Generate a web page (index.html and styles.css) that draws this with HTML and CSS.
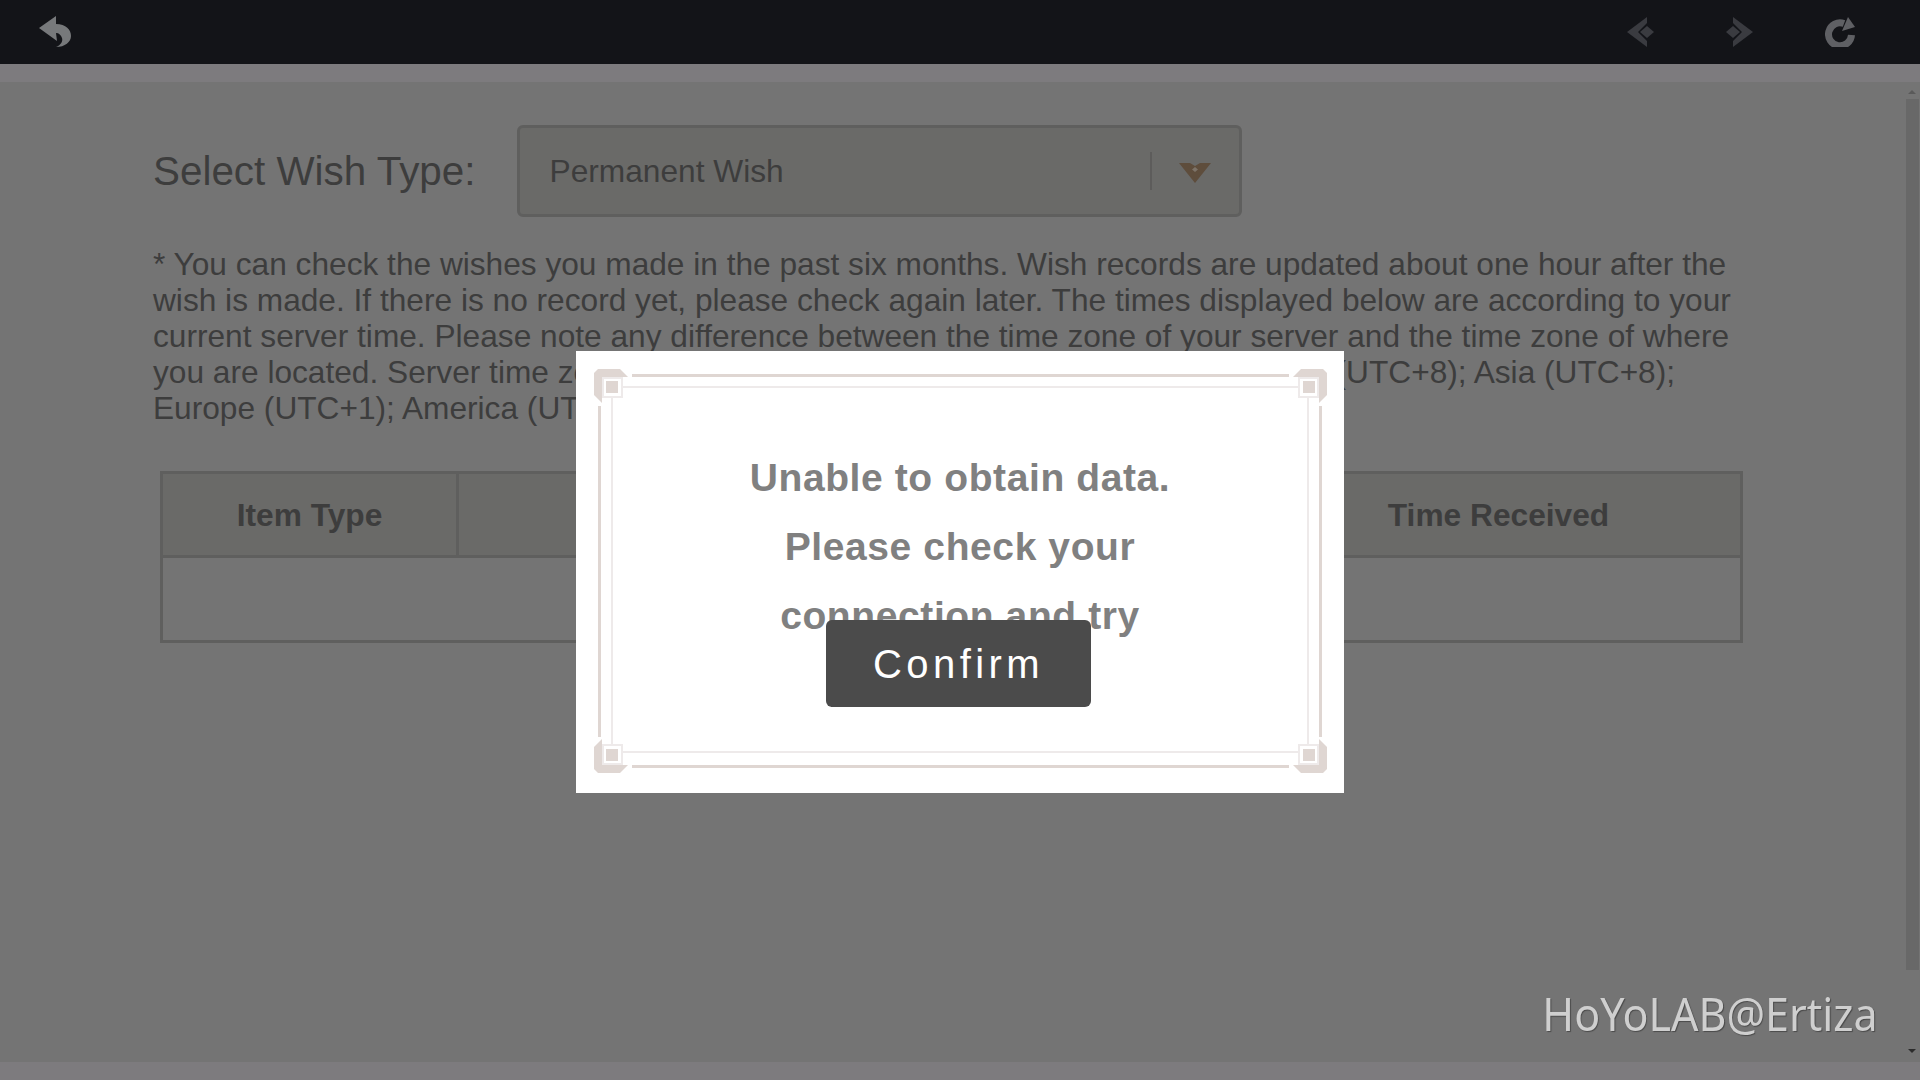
FILE: index.html
```html
<!DOCTYPE html>
<html lang="en">

<head>
    <meta charset="UTF-8">
    <meta name="viewport" content="width=device-width, initial-scale=1.0">
    <title>Wish History</title>
    <link rel="stylesheet" href="styles.css">
</head>

<body>
    <header class="topbar">
        <svg class="icon icon-back" viewBox="0 0 32 32">
            <path d="M0 12 L17 0 L17 8 C27 8 32 14 32 20 C32 26 26 31 17 31 C22 29 24 25 23 22 C22 19 20 17 17 17 L18 25 Z" />
        </svg>
        <div class="topbar-right">
            <svg class="icon icon-nav" viewBox="0 0 27 30">
                <path d="M0 15 L20 0 L20 6 L11 15 L20 24 L20 30 Z" />
                <path d="M13 15 L20 9 L27 15 L20 21 Z" />
            </svg>
            <svg class="icon icon-nav" viewBox="0 0 27 30">
                <path d="M27 15 L7 0 L7 6 L16 15 L7 24 L7 30 Z" />
                <path d="M14 15 L7 9 L0 15 L7 21 Z" />
            </svg>
            <svg class="icon icon-reload" viewBox="0 0 31 30">
                <path class="reload-ring" d="M19 6.5 A11.5 11.5 0 1 0 26.5 18" />
                <path d="M23 0 L30 10 L17 14 Z" />
            </svg>
        </div>
    </header>
    <div class="strip"></div>

    <main class="main">
        <div class="content">
            <div class="select-row">
                <label class="select-label">Select Wish Type:</label>
                <div class="select-box">
                    <span class="select-value">Permanent Wish</span>
                    <span class="select-divider"></span>
                    <svg class="select-arrow" viewBox="0 0 32 20">
                        <path d="M0 0 L11 0 L16 3 L21 0 L32 0 L16 20 Z" />
                        <path class="arrow-notch" d="M16 4 L19 6.5 L16 9 L13 6.5 Z" />
                    </svg>
                </div>
            </div>

            <p class="notice">* You can check the wishes you made in the past six months. Wish records are updated about one hour after the wish is made. If there is no record yet, please check again later. The times displayed below are according to your current server time. Please note any difference between the time zone of your server and the time zone of where you are located. Server time zones are listed: Mainland China (UTC+8); TW/HK/MO (UTC+8); Asia (UTC+8); Europe (UTC+1); America (UTC-5).</p>

            <table class="records">
                <thead>
                    <tr>
                        <th class="col-type">Item Type</th>
                        <th class="col-name">Item Name</th>
                        <th class="col-wish">Wish Type</th>
                        <th class="col-time">Time Received</th>
                    </tr>
                </thead>
                <tbody>
                    <tr>
                        <td colspan="4">No Data</td>
                    </tr>
                </tbody>
            </table>
        </div>

        <div class="scrollbar">
            <span class="scroll-arrow scroll-up"></span>
            <span class="scroll-thumb"></span>
            <span class="scroll-arrow scroll-down"></span>
        </div>
    </main>
    <div class="strip strip-bottom"></div>

    <div class="overlay">
        <div class="dialog">
            <svg class="dialog-frame" viewBox="0 0 768 442">
                <rect class="frame-thin" x="36" y="35" width="697" height="2" />
                <rect class="frame-thin" x="36" y="400" width="697" height="2" />
                <rect class="frame-thin" x="35" y="36" width="2" height="366" />
                <rect class="frame-thin" x="731" y="36" width="2" height="366" />
                <rect class="frame-thick" x="56" y="23" width="657" height="3" />
                <rect class="frame-thick" x="56" y="414" width="657" height="3" />
                <rect class="frame-thick" x="22" y="55" width="3" height="331" />
                <rect class="frame-thick" x="743" y="55" width="3" height="331" />
                <g id="corner">
                    <path class="frame-thick" d="M18 22 L22 18 L44 18 L52 26 L26 26 L26 52 L18 44 Z" />
                    <rect class="corner-box" x="27" y="27" width="19" height="19" />
                    <rect class="frame-thick" x="30" y="30" width="12" height="12" />
                </g>
                <use href="#corner" transform="translate(769 0) scale(-1 1)" />
                <use href="#corner" transform="translate(0 440) scale(1 -1)" />
                <use href="#corner" transform="translate(769 440) scale(-1 -1)" />
            </svg>
            <div class="dialog-text">Unable to obtain data. Please check your connection and try again.</div>
            <button class="dialog-button">Confirm</button>
        </div>
    </div>

    <div class="watermark">HoYoLAB@Ertiza</div>
</body>

</html>
```

FILE: styles.css
```css
* {
    box-sizing: border-box;
}

body {
    margin: 0;
    height: 1080px;
    overflow: hidden;
    background-color: #747474;
    font-family: "Liberation Sans", Arial, sans-serif;
    color: #3d3d3d;
}

.topbar {
    height: 64px;
    background-color: #131418;
    display: flex;
    align-items: center;
    justify-content: space-between;
    padding: 0 64px 0 39px;
}

.topbar-right {
    display: flex;
    align-items: center;
    gap: 72px;
}

.icon {
    display: block;
}

.icon-back {
    width: 32px;
    height: 32px;
    fill: #77797b;
}

.icon-nav {
    width: 27px;
    height: 30px;
    fill: #3a3b40;
}

.icon-reload {
    width: 31px;
    height: 30px;
    fill: #5f6064;
}

.reload-ring {
    fill: none;
    stroke: #5f6064;
    stroke-width: 7;
}

.strip {
    height: 18px;
    background-color: #7d7b7e;
}

.strip-bottom {
    height: 18px;
}

.main {
    height: 980px;
    display: flex;
    justify-content: space-between;
}

.content {
    width: 1904px;
    padding: 43px 0 0 153px;
}

.select-row {
    display: flex;
    align-items: center;
    gap: 41px;
}

.select-label {
    font-size: 40.4px;
}

.select-box {
    width: 725px;
    height: 92px;
    display: flex;
    align-items: center;
    padding-left: 30px;
    background-color: #6a6a68;
    border: 3px solid #5f5f5e;
    border-radius: 6px;
}

.select-value {
    flex: 1;
    font-size: 31.7px;
}

.select-divider {
    width: 2px;
    height: 38px;
    background-color: #5d5c5b;
}

.select-arrow {
    width: 32px;
    height: 20px;
    margin: 4px 28px 0 27px;
    fill: #5e4d3c;
}

.arrow-notch {
    fill: #7d7368;
}

.notice {
    width: 1590px;
    margin: 29px 0 45px;
    font-size: 31.67px;
    line-height: 36px;
}

.records {
    width: 1583px;
    margin-left: 7px;
    border-collapse: collapse;
    table-layout: fixed;
    border: 3px solid #5f5f5e;
}

.records th {
    height: 84px;
    padding-top: 2px;
    font-size: 31.7px;
    background-color: #6a6a68;
    border: 3px solid #5f5f5e;
}

.records td {
    height: 85px;
    font-size: 30px;
    text-align: center;
}

.col-type {
    width: 296px;
}

.col-time {
    width: 486px;
}

.scrollbar {
    width: 16px;
    display: flex;
    flex-direction: column;
    align-items: center;
    padding-top: 8px;
}

.scroll-thumb {
    width: 13px;
    height: 871px;
    margin-top: 5px;
    background-color: #686868;
}

.scroll-arrow {
    width: 0;
    height: 0;
    border-left: 4px solid transparent;
    border-right: 4px solid transparent;
}

.scroll-up {
    border-bottom: 4px solid #5a5a5a;
}

.scroll-down {
    margin-top: 79px;
    border-top: 4px solid #2c2c2c;
}

.overlay {
    position: fixed;
    top: 351px;
    left: 576px;
}

.dialog {
    position: relative;
    width: 768px;
    height: 442px;
    display: flex;
    flex-direction: column;
    align-items: center;
    padding-top: 92px;
    background-color: #fff;
}

.dialog-frame {
    position: absolute;
    top: 0;
    left: 0;
    width: 768px;
    height: 442px;
}

.frame-thin {
    fill: #eeeaea;
}

.frame-thick {
    fill: #dfd6d2;
}

.corner-box {
    fill: #fff;
    stroke: #eeeaea;
    stroke-width: 2;
}

.dialog-text {
    width: 440px;
    height: 177px;
    font-size: 39px;
    font-weight: bold;
    line-height: 69px;
    text-align: center;
    letter-spacing: 0.6px;
    color: #808080;
}

.dialog-button {
    position: relative;
    width: 265px;
    height: 87px;
    margin-right: 3px;
    padding-top: 2px;
    border: none;
    border-radius: 6px;
    background-color: #4b4b4b;
    color: #fff;
    font-family: "Liberation Sans", Arial, sans-serif;
    font-size: 40px;
    letter-spacing: 4.4px;
}

.watermark {
    position: fixed;
    right: 42px;
    top: 977px;
    font-family: "Noto Sans", sans-serif;
    font-size: 46px;
    line-height: 72px;
    color: #cfcfcf;
    text-shadow: 1px 1px 1px #4a4a4a;
    transform: scaleX(0.935);
    transform-origin: right center;
}
```
